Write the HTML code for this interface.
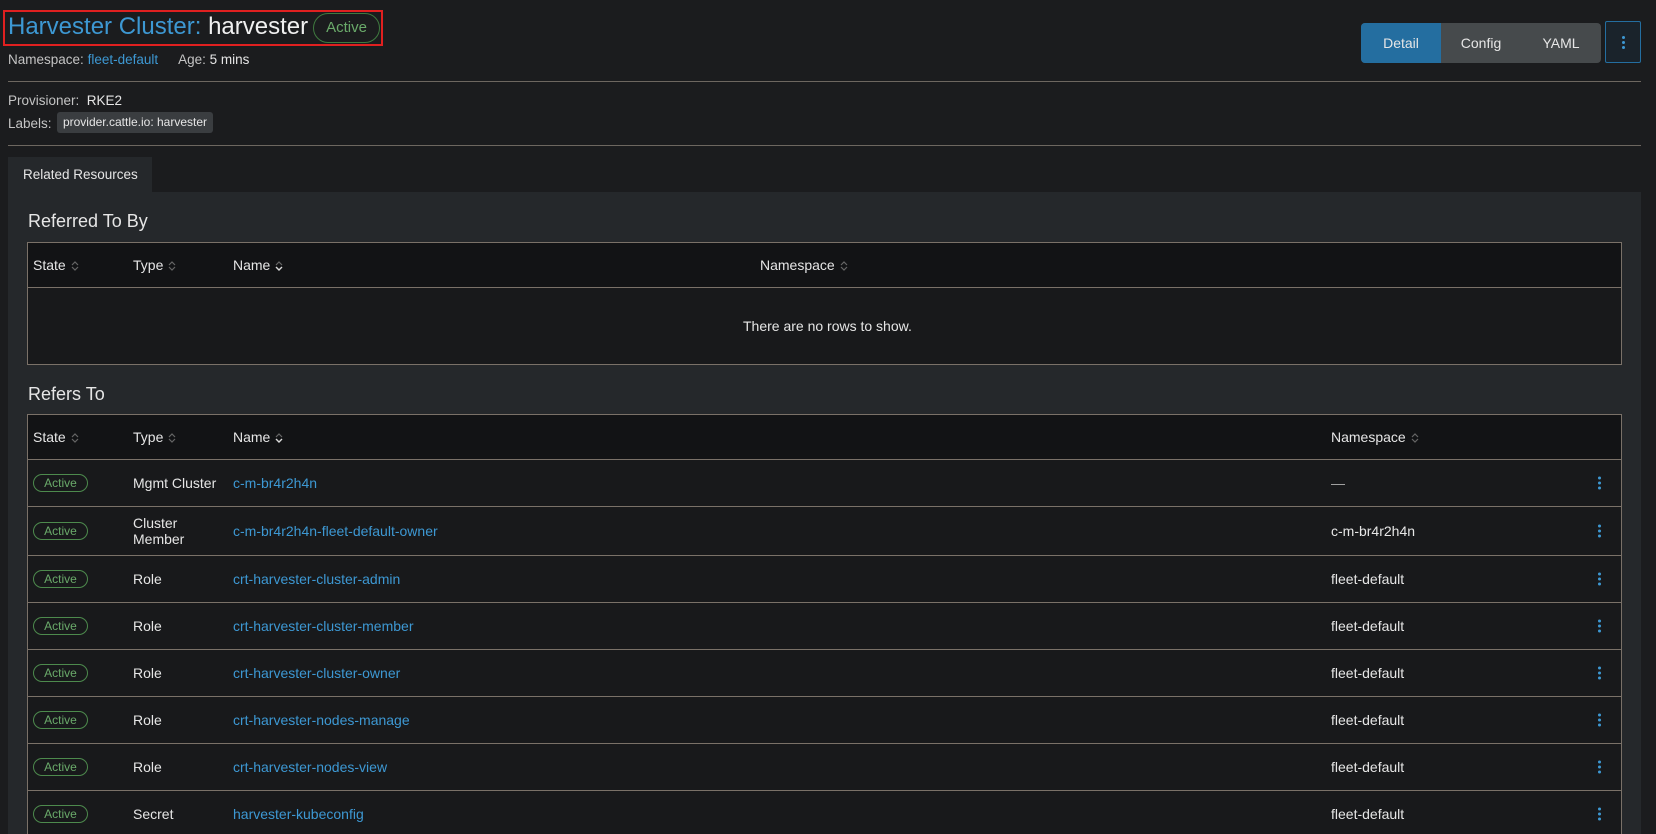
<!DOCTYPE html>
<html style="overflow:hidden;height:834px"><head><meta charset="utf-8"><style>
*{box-sizing:border-box;margin:0;padding:0}
body{width:1656px;height:834px;overflow:hidden;background:#1b1c1e;font-family:"Liberation Sans",sans-serif;color:#e6e6e6;position:relative}
.a{position:absolute;white-space:nowrap}
.link{color:#3d98d3}
.lbl{color:#c4c4c4}
.hr{position:absolute;left:8px;width:1633px;height:1px;background:#6d6760}
.tbl{position:absolute;left:27px;width:1595px;border:1px solid #7a7168;background:#18191b;overflow:hidden}
.hdr{position:absolute;left:0;right:0;top:0;height:45px;background:#121315;border-bottom:1px solid #7a7168}
.row{position:absolute;left:0;right:0;border-bottom:1px solid #7a7168}
.c{position:absolute;font-size:14px;top:50%;transform:translateY(-50%)}
.badge{position:absolute;left:5px;top:50%;transform:translateY(-50%);width:55px;height:18px;border:1px solid #4d8a4d;border-radius:10px;color:#6aaa6a;font-size:12px;text-align:center;line-height:16px}
.kb{position:absolute;left:1570px;top:50%;transform:translateY(-50%);width:3px}
.kb i{display:block;width:3px;height:3px;border-radius:50%;background:#3d98d3;margin:2px 0}
.sort{display:inline-block;vertical-align:middle;margin-left:5px}
</style></head><body>
<div class="a" style="left:3px;top:10px;width:380px;height:36px;border:2px solid #e02020"></div>
<div class="a" style="left:8px;top:12px;font-size:24px;line-height:30px"><span class="link">Harvester Cluster:</span> <span style="color:#f0f0f0">harvester</span></div>
<div class="a" style="left:313px;top:13px;width:67px;height:30px;border:1px solid #3f7a3f;border-radius:15px;color:#6aaa6a;font-size:15px;line-height:28px;text-align:center">Active</div>
<div class="a" style="left:8px;top:52px;font-size:13.5px"><span class="lbl">Namespace:</span> <span class="link">fleet-default</span><span class="lbl" style="margin-left:20px">Age:</span> 5 mins</div>
<div class="a" style="left:1361px;top:23px;width:240px;height:40px;border-radius:4px;background:#464a4c;overflow:hidden;font-size:14px">
<div class="a" style="left:0;top:0;width:80px;height:40px;background:#246ea0;text-align:center;line-height:40px">Detail</div>
<div class="a" style="left:80px;top:0;width:80px;height:40px;text-align:center;line-height:40px">Config</div>
<div class="a" style="left:160px;top:0;width:80px;height:40px;text-align:center;line-height:40px">YAML</div></div>
<div class="a" style="left:1605px;top:21px;width:36px;height:42px;border:1px solid #246ea0;background:#1a232b;border-radius:2px"><div style="position:absolute;left:16px;top:14px"><i style="display:block;width:3px;height:3px;background:#3d98d3;border-radius:50%;margin-bottom:2px"></i><i style="display:block;width:3px;height:3px;background:#3d98d3;border-radius:50%;margin-bottom:2px"></i><i style="display:block;width:3px;height:3px;background:#3d98d3;border-radius:50%"></i></div></div>
<div class="hr" style="top:81px"></div>
<div class="a" style="left:8px;top:93px;font-size:13.5px"><span class="lbl">Provisioner:</span>&nbsp; RKE2</div>
<div class="a lbl" style="left:8px;top:116px;font-size:13.5px">Labels:</div>
<div class="a" style="left:57px;top:112px;width:156px;height:21px;background:#3a3d40;border-radius:3px;font-size:12px;line-height:21px;text-align:center">provider.cattle.io: harvester</div>
<div class="hr" style="top:145px"></div>
<div class="a" style="left:8px;top:157px;width:144px;height:36px;background:#25282b;font-size:13.5px;line-height:36px;padding-left:15px">Related Resources</div>
<div class="a" style="left:8px;top:192px;width:1633px;height:642px;background:#25282b"></div>
<div class="a" style="left:28px;top:211px;font-size:18px">Referred To By</div>
<div class="tbl" style="top:242px;height:123px">
<div class="hdr"><span class="c" style="left:5px">State<svg class="sort" width="8" height="12"><path d="M1 5L4 2L7 5M1 7L4 10L7 7" stroke="#666" fill="none" stroke-width="1.2"/></svg></span><span class="c" style="left:105px">Type<svg class="sort" width="8" height="12"><path d="M1 5L4 2L7 5M1 7L4 10L7 7" stroke="#666" fill="none" stroke-width="1.2"/></svg></span><span class="c" style="left:205px">Name<svg class="sort" width="8" height="12"><path d="M1 5L4 2L7 5" stroke="#666" fill="none" stroke-width="1.2"/><path d="M1 7L4 10L7 7" stroke="#ddd" fill="none" stroke-width="1.4"/></svg></span><span class="c" style="left:732px">Namespace<svg class="sort" width="8" height="12"><path d="M1 5L4 2L7 5M1 7L4 10L7 7" stroke="#666" fill="none" stroke-width="1.2"/></svg></span></div>
<div class="a" style="left:715px;top:75px;font-size:14px">There are no rows to show.</div>
</div>
<div class="a" style="left:28px;top:384px;font-size:18px">Refers To</div>
<div class="tbl" style="top:414px;height:420px;border-bottom:none">
<div class="hdr"><span class="c" style="left:5px">State<svg class="sort" width="8" height="12"><path d="M1 5L4 2L7 5M1 7L4 10L7 7" stroke="#666" fill="none" stroke-width="1.2"/></svg></span><span class="c" style="left:105px">Type<svg class="sort" width="8" height="12"><path d="M1 5L4 2L7 5M1 7L4 10L7 7" stroke="#666" fill="none" stroke-width="1.2"/></svg></span><span class="c" style="left:205px">Name<svg class="sort" width="8" height="12"><path d="M1 5L4 2L7 5" stroke="#666" fill="none" stroke-width="1.2"/><path d="M1 7L4 10L7 7" stroke="#ddd" fill="none" stroke-width="1.4"/></svg></span><span class="c" style="left:1303px">Namespace<svg class="sort" width="8" height="12"><path d="M1 5L4 2L7 5M1 7L4 10L7 7" stroke="#666" fill="none" stroke-width="1.2"/></svg></span></div>
<div class="row" style="top:45px;height:47px"><div class="badge">Active</div><span class="c" style="left:105px">Mgmt Cluster</span><span class="c link" style="left:205px">c-m-br4r2h4n</span><span class="c" style="left:1303px;color:#aaa">—</span><div class="kb"><i></i><i></i><i></i></div></div>
<div class="row" style="top:92px;height:49px"><div class="badge">Active</div><span class="c" style="left:105px;line-height:16px">Cluster<br>Member</span><span class="c link" style="left:205px">c-m-br4r2h4n-fleet-default-owner</span><span class="c" style="left:1303px">c-m-br4r2h4n</span><div class="kb"><i></i><i></i><i></i></div></div>
<div class="row" style="top:141px;height:47px"><div class="badge">Active</div><span class="c" style="left:105px">Role</span><span class="c link" style="left:205px">crt-harvester-cluster-admin</span><span class="c" style="left:1303px">fleet-default</span><div class="kb"><i></i><i></i><i></i></div></div>
<div class="row" style="top:188px;height:47px"><div class="badge">Active</div><span class="c" style="left:105px">Role</span><span class="c link" style="left:205px">crt-harvester-cluster-member</span><span class="c" style="left:1303px">fleet-default</span><div class="kb"><i></i><i></i><i></i></div></div>
<div class="row" style="top:235px;height:47px"><div class="badge">Active</div><span class="c" style="left:105px">Role</span><span class="c link" style="left:205px">crt-harvester-cluster-owner</span><span class="c" style="left:1303px">fleet-default</span><div class="kb"><i></i><i></i><i></i></div></div>
<div class="row" style="top:282px;height:47px"><div class="badge">Active</div><span class="c" style="left:105px">Role</span><span class="c link" style="left:205px">crt-harvester-nodes-manage</span><span class="c" style="left:1303px">fleet-default</span><div class="kb"><i></i><i></i><i></i></div></div>
<div class="row" style="top:329px;height:47px"><div class="badge">Active</div><span class="c" style="left:105px">Role</span><span class="c link" style="left:205px">crt-harvester-nodes-view</span><span class="c" style="left:1303px">fleet-default</span><div class="kb"><i></i><i></i><i></i></div></div>
<div class="row" style="top:376px;height:47px"><div class="badge">Active</div><span class="c" style="left:105px">Secret</span><span class="c link" style="left:205px">harvester-kubeconfig</span><span class="c" style="left:1303px">fleet-default</span><div class="kb"><i></i><i></i><i></i></div></div>
</div>
</body></html>
